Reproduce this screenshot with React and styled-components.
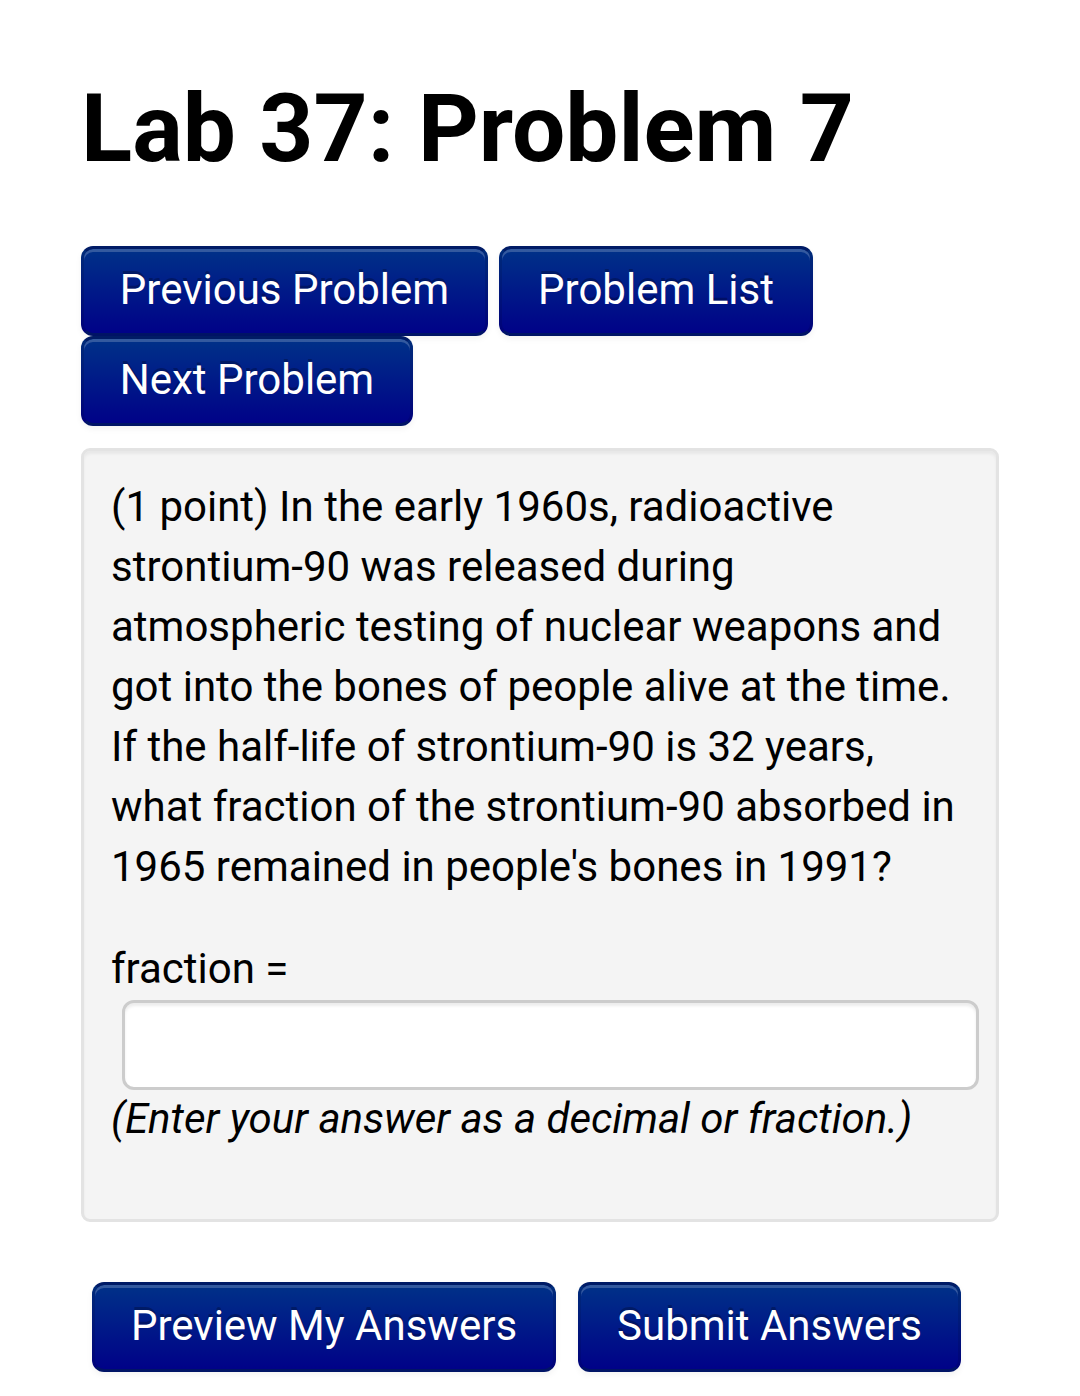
import React from 'react';
import styled, { createGlobalStyle } from "styled-components";

const GlobalStyle = createGlobalStyle`
  * {
    box-sizing: border-box;
  }

  body {
    margin: 0;
    background-color: white;
    color: black;
    font-family: Roboto, "Liberation Sans", sans-serif;
    font-size: 42px;
    line-height: 60px;
  }
`;

const Page = styled.main`
  height: 1396px;
  padding: 69px 81px 0;
  overflow: hidden;
`;

const Title = styled.h1`
  margin: 0;
  font-size: 94.5px;
  font-weight: 700;
  line-height: 120px;
  white-space: nowrap;
`;

const Nav = styled.nav`
  display: flex;
  flex-wrap: wrap;
  column-gap: 11px;
  margin-top: 57px;
`;

const Button = styled.button`
  width: ${(props) => props.$width}px;
  height: 90px;
  padding: 0 0 2px;
  border: 3px solid;
  border-color: #001b66 rgba(0, 0, 0, 0.1) #001466;
  border-radius: 12px;
  background: linear-gradient(to bottom, #003388, #000088) border-box;
  box-shadow: inset 0 3px 0 rgba(255, 255, 255, 0.2), 0 3px 6px rgba(0, 0, 0, 0.05);
  color: white;
  font: inherit;
  text-shadow: 0 -3px 0 rgba(0, 0, 0, 0.25);
  white-space: nowrap;
`;

const ProblemBox = styled.section`
  height: 774px;
  margin-top: 22px;
  padding: 26px 17px 0 27px;
  border: 3px solid #e3e3e3;
  border-radius: 9px;
  background-color: #f4f4f4;
  box-shadow: inset 0 3px 3px rgba(0, 0, 0, 0.05);
`;

const Text = styled.p`
  margin: 0;
  white-space: nowrap;
`;

const Answer = styled.div`
  margin-top: 42px;
`;

const AnswerInput = styled.input`
  display: block;
  width: 857px;
  height: 90px;
  margin: 1px 0 -1px 11px;
  padding: 12px 18px;
  border: 3px solid #cccccc;
  border-radius: 12px;
  background-color: white;
  box-shadow: inset 0 3px 3px rgba(0, 0, 0, 0.075);
  font: inherit;
`;

const Hint = styled.em`
  display: block;
  white-space: nowrap;
`;

const Actions = styled.div`
  display: flex;
  gap: 22px;
  margin: 60px 0 0 11px;
`;

const App = () => {
  return (
    <>
      <GlobalStyle />
      <Page>
        <Title>Lab 37: Problem 7</Title>
        <Nav>
          <Button $width={407}>Previous Problem</Button>
          <Button $width={314}>Problem List</Button>
          <Button $width={332}>Next Problem</Button>
        </Nav>
        <ProblemBox>
          <Text>
            (1 point) In the early 1960s, radioactive<br />
            strontium-90 was released during<br />
            atmospheric testing of nuclear weapons and<br />
            got into the bones of people alive at the time.<br />
            If the half-life of strontium-90 is 32 years,<br />
            what fraction of the strontium-90 absorbed in<br />
            1965 remained in people's bones in 1991?
          </Text>
          <Answer>
            <label htmlFor="fraction">fraction =</label>
            <AnswerInput id="fraction" type="text" />
            <Hint>(Enter your answer as a decimal or fraction.)</Hint>
          </Answer>
        </ProblemBox>
        <Actions>
          <Button $width={464}>Preview My Answers</Button>
          <Button $width={383}>Submit Answers</Button>
        </Actions>
      </Page>
    </>
  );
};

export default App;
